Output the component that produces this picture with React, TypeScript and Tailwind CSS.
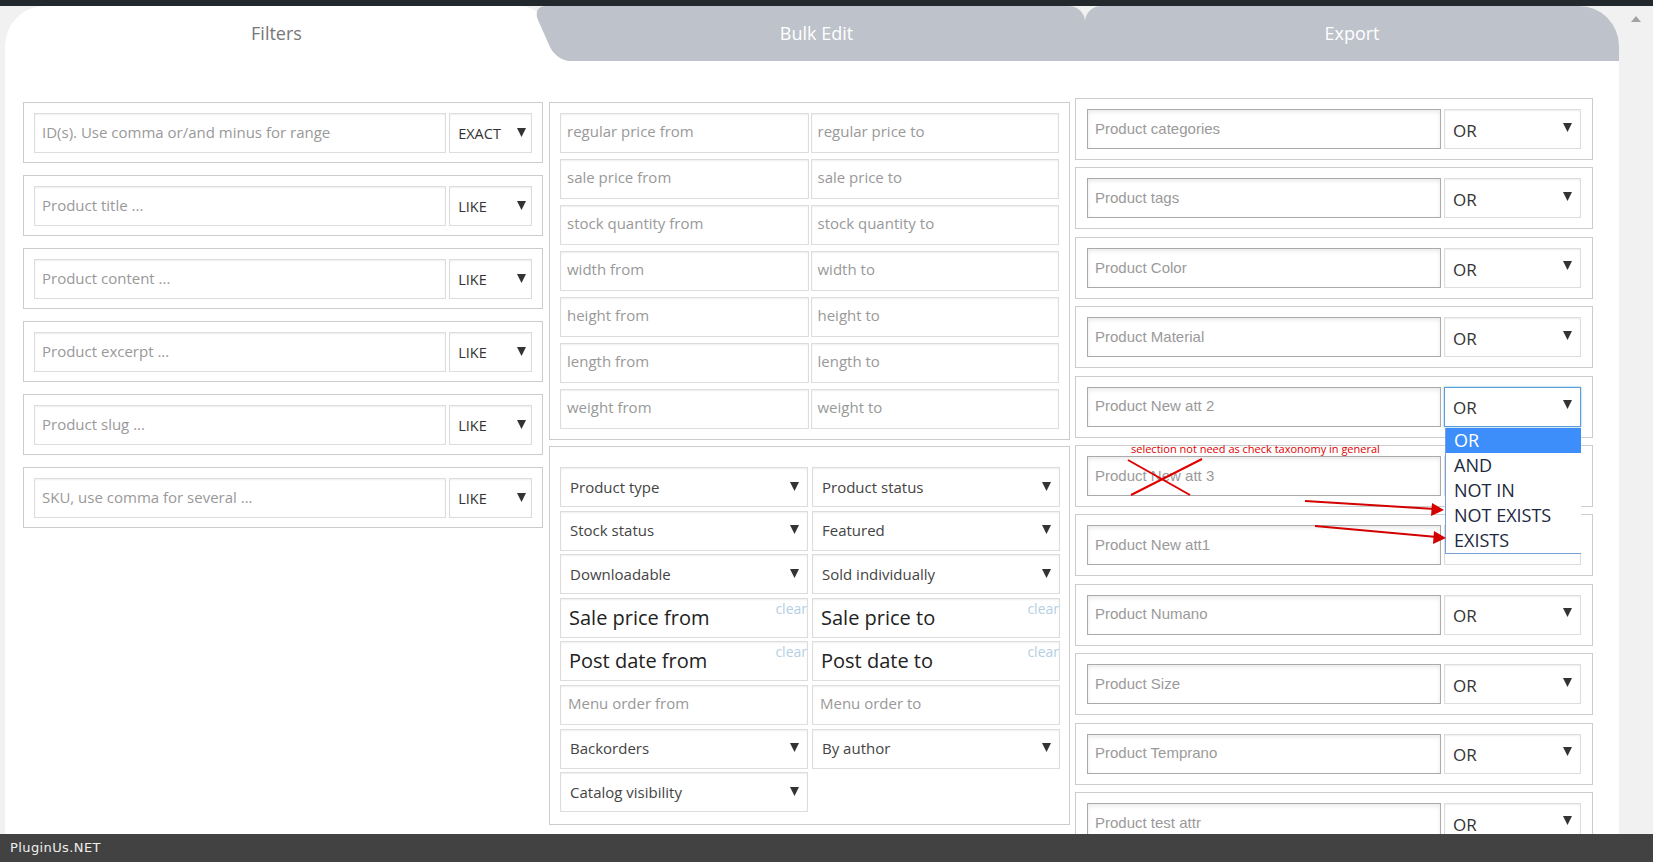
import React from 'react';

const openSans = "font-['Open_Sans',sans-serif]";
const arial = "font-['Liberation_Sans',Arial,sans-serif]";

const Caret: React.FC<{ color?: string }> = ({ color = '#333' }) => (
  <svg width="9" height="10" viewBox="0 0 9 10" className="shrink-0">
    <path d="M0 1h9L4.5 10z" fill={color} />
  </svg>
);

const textRows: [string, string][] = [
  ['ID(s). Use comma or/and minus for range', 'EXACT'],
  ['Product title ...', 'LIKE'],
  ['Product content ...', 'LIKE'],
  ['Product excerpt ...', 'LIKE'],
  ['Product slug ...', 'LIKE'],
  ['SKU, use comma for several ...', 'LIKE'],
];

const ranges = ['regular price', 'sale price', 'stock quantity', 'width', 'height', 'length', 'weight'];

const taxonomies = [
  'Product categories',
  'Product tags',
  'Product Color',
  'Product Material',
  'Product New att 2',
  'Product New att 3',
  'Product New att1',
  'Product Numano',
  'Product Size',
  'Product Temprano',
  'Product test attr',
];

const SelectCell: React.FC<{ label: string }> = ({ label }) => (
  <div className="h-[40px] border border-[#ddd] shadow-[inset_0_1px_2px_rgba(0,0,0,0.07)] bg-white flex items-center justify-between pl-[9px] pr-[8px] text-[15px] text-[#444]">
    <span>{label}</span>
    <span className="-mt-[3px]">
      <Caret />
    </span>
  </div>
);

const DateCell: React.FC<{ label: string }> = ({ label }) => (
  <div className="relative h-[40px] border border-[#ddd] shadow-[inset_0_1px_2px_rgba(0,0,0,0.07)] bg-white flex items-center pl-[8px] text-[20px] text-[#222]">
    {label}
    <span className="absolute right-0 top-[1px] text-[14px] leading-[18px] text-[#b5cfe3]">clear</span>
  </div>
);

const App: React.FC = () => {
  return (
    <div className={`w-[1653px] h-[862px] bg-[#f1f1f1] flex flex-col overflow-hidden ${openSans}`}>
      <div className="h-[6px] bg-[#23282d] shrink-0" />
      <div className="flex flex-1 min-h-0">
        <div className="w-[5px] shrink-0" />
        <div className="w-[1614px] flex flex-col">
          {/* tabs */}
          <div className="h-[55px] flex shrink-0 text-[18px]">
            <div className="w-[543px] bg-white rounded-tl-[40px] rounded-tr-[28px] flex items-center justify-center text-[#777]">
              Filters
            </div>
            <div className="relative w-[537px] bg-[linear-gradient(#f1f1f1_50%,#fff_50%)]">
              <div className="absolute left-[-4px] top-0 h-full w-[50px] bg-[#bec2ca] rounded-tl-[14px] rounded-bl-[14px] skew-x-[24deg]" />
              <div className="relative ml-[20px] h-full bg-[#bec2ca] rounded-tr-[16px] flex items-center justify-center text-white pr-[20px]">
                Bulk Edit
              </div>
            </div>
            <div className="flex-1 bg-[#bec2ca] rounded-tl-[16px] rounded-tr-[40px] flex items-center justify-center text-white">
              Export
            </div>
          </div>

          {/* content */}
          <div className="flex-1 bg-white flex items-start pl-[18px] pt-[37px] overflow-hidden">
            {/* column 1 */}
            <div className="w-[520px] mt-[4px] flex flex-col gap-[12px]">
              {textRows.map(([ph, op]) => (
                <div key={ph} className="h-[61px] border border-[#ccc] flex items-center px-[10px] gap-[3px]">
                  <div className="w-[413px] h-[40px] border border-[#ddd] shadow-[inset_0_1px_2px_rgba(0,0,0,0.07)] flex items-center pl-[7px] text-[15px] text-[#999]">
                    {ph}
                  </div>
                  <div className="w-[83px] h-[40px] border border-[#ddd] shadow-[inset_0_1px_2px_rgba(0,0,0,0.07)] flex items-center justify-between pl-[8px] pr-[5px] pt-[3px] text-[14.5px] text-[#333]">
                    <span>{op}</span>
                    <span className="-mt-[5px]">
                      <Caret />
                    </span>
                  </div>
                </div>
              ))}
            </div>

            {/* column 2 */}
            <div className="w-[521px] ml-[6px] mt-[4px] flex flex-col gap-[6px]">
              <div className="border border-[#ccc] p-[10px] flex flex-col gap-[6px]">
                {ranges.map((r) => (
                  <div key={r} className="grid grid-cols-2 gap-[2px]">
                    <div className="h-[40px] border border-[#ddd] shadow-[inset_0_1px_2px_rgba(0,0,0,0.07)] flex items-center pl-[6px] pb-[3px] text-[15px] text-[#999]">
                      {r} from
                    </div>
                    <div className="h-[40px] border border-[#ddd] shadow-[inset_0_1px_2px_rgba(0,0,0,0.07)] flex items-center pl-[6px] pb-[3px] text-[15px] text-[#999]">
                      {r} to
                    </div>
                  </div>
                ))}
              </div>
              <div className="border border-[#ccc] pt-[20px] pb-[12px] pl-[10px] pr-[9px] grid grid-cols-2 gap-x-[4px] gap-y-[3.6px]">
                <SelectCell label="Product type" />
                <SelectCell label="Product status" />
                <SelectCell label="Stock status" />
                <SelectCell label="Featured" />
                <SelectCell label="Downloadable" />
                <SelectCell label="Sold individually" />
                <DateCell label="Sale price from" />
                <DateCell label="Sale price to" />
                <DateCell label="Post date from" />
                <DateCell label="Post date to" />
                <div className="h-[40px] border border-[#ddd] shadow-[inset_0_1px_2px_rgba(0,0,0,0.07)] flex items-center pl-[7px] pb-[3px] text-[15px] text-[#999]">
                  Menu order from
                </div>
                <div className="h-[40px] border border-[#ddd] shadow-[inset_0_1px_2px_rgba(0,0,0,0.07)] flex items-center pl-[7px] pb-[3px] text-[15px] text-[#999]">
                  Menu order to
                </div>
                <SelectCell label="Backorders" />
                <SelectCell label="By author" />
                <SelectCell label="Catalog visibility" />
              </div>
            </div>

            {/* column 3 */}
            <div className="relative w-[518px] ml-[5px] flex flex-col gap-[7.4px]">
              {taxonomies.map((t, i) => (
                <div key={t} className="h-[62px] shrink-0 border border-[#ccc] flex items-center pl-[11px] gap-[3px]">
                  <div
                    className={`w-[354px] h-[40px] border border-[#aaa] shadow-[inset_0_2px_4px_rgba(0,0,0,0.09)] flex items-center pl-[7px] text-[15px] text-[#9a9a9a] ${arial}`}
                  >
                    {t}
                  </div>
                  <div
                    className={`w-[137px] h-[40px] border flex items-center justify-between pl-[8px] pr-[8px] text-[17px] text-[#333] ${
                      i === 4
                        ? 'border-[#5b9dd9] shadow-[0_0_2px_rgba(30,140,190,0.6)]'
                        : 'border-[#ddd] shadow-[inset_0_1px_2px_rgba(0,0,0,0.07)]'
                    }`}
                  >
                    <span className="pt-[3px]">OR</span>
                    <span className="-mt-[5px]">
                      <Caret />
                    </span>
                  </div>
                </div>
              ))}

              {/* opened dropdown */}
              <div className="absolute left-[370px] top-[330px] w-[136px] bg-white border-l border-b border-[#7aa0d8] text-[18px] leading-[25px] text-[#1b2840]">
                <div className="bg-[#3d8efb] text-white pl-[8px]">OR</div>
                <div className="pl-[8px]">AND</div>
                <div className="pl-[8px]">NOT IN</div>
                <div className="pl-[8px]">NOT EXISTS</div>
                <div className="pl-[8px]">EXISTS</div>
              </div>

              {/* annotation */}
              <div className="absolute left-[56px] top-[344px] text-[11px] leading-[14px] text-[#e00000] whitespace-nowrap">
                selection not need as check taxonomy in general
              </div>
              <svg className="absolute left-0 top-0 overflow-visible pointer-events-none" width="518" height="700">
                <line x1="53" y1="362" x2="115" y2="397" stroke="#e00000" strokeWidth="2" />
                <line x1="127" y1="361" x2="56" y2="397" stroke="#e00000" strokeWidth="2" />
                <line x1="230" y1="403" x2="360" y2="411" stroke="#d40000" strokeWidth="2" />
                <path d="M369 412 L357 405 L356 418 Z" fill="#d40000" />
                <line x1="240" y1="428" x2="362" y2="439" stroke="#d40000" strokeWidth="2" />
                <path d="M371 440 L359 433 L358 446 Z" fill="#d40000" />
              </svg>
            </div>
          </div>
        </div>
        {/* scrollbar */}
        <div className="flex-1 flex justify-center pt-[10px]">
          <svg width="10" height="6" viewBox="0 0 10 6">
            <path d="M0 6L5 0L10 6z" fill="#a3a3a3" />
          </svg>
        </div>
      </div>
      <div className="h-[28px] shrink-0 bg-[#424242] flex items-center pl-[10px] text-[13px] tracking-[0.4px] text-[#eee] font-['DejaVu_Sans',sans-serif]">
        PluginUs.NET
      </div>
    </div>
  );
};

export default App;
